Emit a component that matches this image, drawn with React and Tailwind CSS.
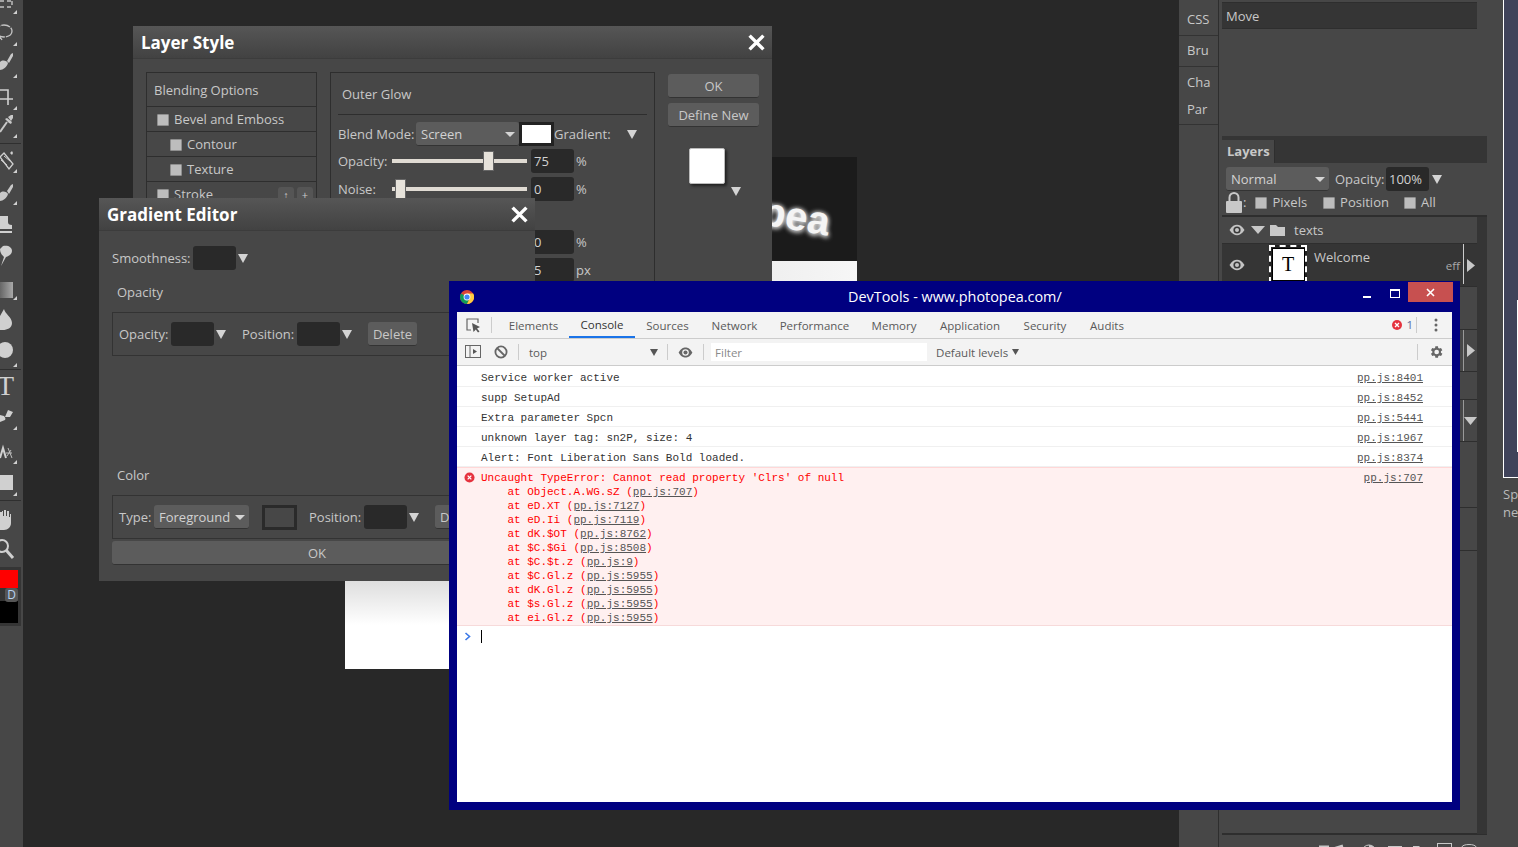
import { Fragment } from "react";

const Tri = ({ className = "" }) => (
  <svg width="10" height="10" viewBox="0 0 10 10" className={className}>
    <polygon points="0,1 10,1 5,10" fill="#d4d4d4" />
  </svg>
);

const CloseX = ({ size = 16 }) => (
  <svg width={size} height={size} viewBox="0 0 16 16">
    <path d="M1.5 1.5L14.5 14.5M14.5 1.5L1.5 14.5" stroke="#fff" strokeWidth="3.2" />
  </svg>
);

const Check = ({ className = "" }) => (
  <span className={`inline-block h-[12px] w-[12px] shrink-0 rounded-[1px] border border-[#8f8f8f] bg-[#bdbdbd] ${className}`} />
);

const Eye = () => (
  <svg width="16" height="12" viewBox="0 0 16 12">
    <path d="M0.5 6C3 2 5.5 0.8 8 0.8S13 2 15.5 6C13 10 10.5 11.2 8 11.2S3 10 0.5 6Z" fill="#c4c4c4" />
    <circle cx="8" cy="6" r="3.6" fill="#3a3a3a" />
    <circle cx="8" cy="6" r="2" fill="#c4c4c4" />
  </svg>
);

const Field = ({ value, className = "" }) => (
  <div className={`flex h-[24px] w-[43px] shrink-0 items-center rounded-[3px] bg-[#292929] pl-[3px] pt-[2px] text-[13px] text-[#d2d2d2] ${className}`}>
    {value}
  </div>
);

const Select = ({ label, className = "" }) => (
  <div className={`flex h-[24px] shrink-0 items-center justify-between rounded-[3px] border-b border-[#333] bg-[#5c5c5c] pl-[5px] pr-[4px] pt-[2px] text-[13px] text-[#d2d2d2] ${className}`}>
    {label}
    <svg width="10" height="6" viewBox="0 0 10 6"><polygon points="0,0 10,0 5,5" fill="#d4d4d4" /></svg>
  </div>
);

const Button = ({ label, className = "" }) => (
  <div className={`flex h-[24px] items-center justify-center rounded-[3px] border-b border-[#333] bg-[#5c5c5c] pt-[2px] text-[13px] text-[#c8c8c8] ${className}`}>
    {label}
  </div>
);

const Corner = ({ y }) => <polygon points={`17,${y} 17,${y + 4} 13,${y + 4}`} fill="#d0d0d0" />;

const tools = [
  { h: 15, c: 10, icon: <path d="M0 1H4M7 1H11M12 1V5M0 7H4M7 7H11" stroke="#c4c4c4" strokeWidth="1.4" fill="none" /> },
  { h: 31, c: 27, icon: <><ellipse cx="4" cy="16" rx="8" ry="6" stroke="#c4c4c4" strokeWidth="1.3" fill="none" strokeDasharray="9 1" /><path d="M0 22L2 25" stroke="#c4c4c4" strokeWidth="1.3" /></> },
  { h: 32, c: 28, icon: <path d="M7 15L11 8L13 7L13 10L9 17ZM0 16C3 13 7 15 8 17C7 21 3 24 0 24Z" fill="#c8c8c8" /> },
  { h: 32, c: 28, icon: <path d="M0 12H8V27M0 21H13" stroke="#d0d0d0" strokeWidth="1.6" fill="none" /> },
  { h: 33, c: 24, icon: <><path d="M8 7L11 5H13V8L11 11ZM5 9L7 8L12 12L11 14L9 13Z" fill="#c8c8c8" /><path d="M7 12L0 22" stroke="#c8c8c8" strokeWidth="2" /></> },
  { sep: true },
  { h: 32, c: 25, icon: <><path d="M0 13L4 9L13 20L9 25Z" stroke="#d0d0d0" strokeWidth="1.3" fill="none" /><path d="M1 16L7 21M4 12L10 17" stroke="#d0d0d0" /><path d="M10 9L12 7L13 9L12 11Z" fill="#d0d0d0" /></> },
  { h: 32, c: 25, icon: <path d="M7 15L11 9L13 8L13 11L9 18ZM0 17C3 14 7 16 8 18C7 22 3 25 0 25Z" fill="#c8c8c8" /> },
  { h: 32, icon: <path d="M0 8H8V14C8 16 9 17 12 17V21H0ZM0 23H12V25H0Z" fill="#d0d0d0" /> },
  { h: 32, icon: <path d="M3 6C8 5 12 7 12 11C12 14 9 16 6 17L1 26L4 17C2 15 0 13 0 9Z" fill="#d0d0d0" /> },
  { h: 32, c: 24, grad: true, icon: <rect x="0" y="10" width="13" height="16" fill="url(#tg)" /> },
  { h: 31, icon: <path d="M4 5C5 10 12 13 12 19C12 24 7 26 3 26H0V12Z" fill="#d0d0d0" /> },
  { h: 34, c: 28, icon: <circle cx="5" cy="15" r="8" fill="#d0d0d0" /> },
  { sep: true },
  { h: 32, t: true },
  { h: 34, c: 24, icon: <path d="M8 8L13 10L10 15L5 15ZM4 14C5 15 6 17 5 18L0 20V13Z" fill="#d0d0d0" /> },
  { h: 32, c: 24, icon: <><path d="M0 22L3 12L6 22" stroke="#d0d0d0" strokeWidth="2" fill="none" /><path d="M8 12L12 22M11 14L7 20M6 17H12" stroke="#c0c0c0" /></> },
  { h: 32, c: 24, icon: <rect x="0" y="7" width="13" height="15" fill="#d0d0d0" /> },
  { sep: true },
  { h: 33, icon: <path d="M0 14V11H2V10H3V15H4V9H6V15H7V10H9V16H10V13H11V22C11 26 8 29 4 29H0Z" fill="#d0d0d0" /> },
  { h: 32, icon: <><circle cx="2" cy="12" r="6" fill="none" stroke="#d0d0d0" strokeWidth="2" /><path d="M6 16L13 24" stroke="#d0d0d0" strokeWidth="3" /></> },
];

function Toolbar() {
  return (
    <div className="flex w-[23px] shrink-0 flex-col overflow-hidden bg-[#474747]">
      {tools.map((tool, i) =>
        tool.sep ? (
          <div key={i} className="h-[1px] w-[21px] shrink-0 bg-[#2f2f2f]" />
        ) : tool.t ? (
          <div key={i} className="flex h-[32px] w-[23px] shrink-0 items-center overflow-hidden">
            <span className="-ml-[3px] font-['Liberation_Serif',serif] text-[28px] leading-none text-[#d0d0d0]">T</span>
          </div>
        ) : (
          <svg key={i} width="23" height={tool.h} viewBox={`0 0 23 ${tool.h}`} className="shrink-0">
            {tool.grad && (
              <defs>
                <linearGradient id="tg">
                  <stop offset="0" stopColor="#666" />
                  <stop offset="1" stopColor="#a8a8a8" />
                </linearGradient>
              </defs>
            )}
            {tool.icon}
            {tool.c && <Corner y={tool.c} />}
          </svg>
        )
      )}
      <div className="mt-[1px] flex h-[59px] w-[21px] shrink-0 flex-col justify-between bg-[#353535] py-[3px]">
        <div className="h-[18px] w-[18px] bg-[#ff0000]" />
        <div className="relative z-10 -my-[3px] ml-[5px] flex h-[14px] w-[13px] items-center justify-center rounded-[3px] bg-[#555] text-[12px] leading-none text-[#b5d3f2]">
          D
        </div>
        <div className="h-[22px] w-[18px] bg-black" />
      </div>
    </div>
  );
}

function Canvas() {
  return (
    <div className="absolute left-[345px] top-[157px] h-[512px] w-[512px] overflow-hidden bg-[#ffffff]">
      <div className="flex h-[104px] items-start justify-end overflow-hidden bg-[#1b1b1b] pr-[26px] pt-[25px]">
        <span className="rotate-[10deg] font-['Liberation_Sans',sans-serif] text-[40px] font-bold leading-[48px] text-[#f4f4f4] [text-shadow:0_0_5px_#fff,1px_2px_5px_#aaa]">
          Photopea
        </span>
      </div>
      <div className="h-[320px] bg-gradient-to-r from-[#cfcfcf] to-[#f6f6f6]" />
      <div className="h-[88px] bg-gradient-to-b from-[#dedede] via-white via-50% to-white" />
    </div>
  );
}

const listRow = "flex items-center border-b border-[#2e2e2e] pt-[2px] text-[13px]";
const formRow = "flex h-[24px] items-center [&>span]:pt-[2px]";

function LayerStyle() {
  return (
    <div className="absolute left-[133px] top-[26px] h-[480px] w-[639px] bg-[#474747] text-[#c8c8c8]">
      <div className="flex h-[33px] items-center justify-between border-b border-[#3c3c3c] bg-gradient-to-b from-[#565656] to-[#424242] pl-[8px] pr-[7px]">
        <span className="mt-[2px] text-[17px] font-bold text-white">Layer Style</span>
        <CloseX size={17} />
      </div>
      <div className="flex pl-[13px] pt-[13px]">
        <div className="w-[171px] shrink-0 border border-[#2e2e2e]">
          <div className={`h-[34px] pl-[7px] ${listRow}`}>Blending Options</div>
          <div className={`h-[25px] gap-[5px] pl-[10px] ${listRow}`}><Check />Bevel and Emboss</div>
          <div className={`h-[25px] gap-[5px] pl-[23px] ${listRow}`}><Check />Contour</div>
          <div className={`h-[25px] gap-[5px] pl-[23px] ${listRow}`}><Check />Texture</div>
          <div className={`h-[25px] gap-[5px] pl-[10px] ${listRow}`}>
            <Check />Stroke
            <span className="ml-auto flex h-[16px] w-[16px] items-center justify-center rounded-[3px] bg-[#555] text-[11px]">↑</span>
            <span className="mr-[3px] -ml-[2px] flex h-[16px] w-[16px] items-center justify-center rounded-[3px] bg-[#555] text-[11px]">+</span>
          </div>
        </div>
        <div className="ml-[13px] h-[400px] w-[325px] shrink-0 border border-[#2e2e2e] px-[7px] text-[13px]">
          <div className="flex h-[42px] items-center border-b border-[#2e2e2e] pl-[4px] pt-[2px]">Outer Glow</div>
          <div className={`mt-[7px] ${formRow}`}>
            <span className="w-[78px] shrink-0">Blend Mode:</span>
            <Select label="Screen" className="w-[103px]" />
            <div className="h-[24px] w-[35px] shrink-0 border-[3px] border-[#222] bg-white" />
            <span>Gradient:</span>
            <Tri className="ml-[16px]" />
          </div>
          <div className={`mt-[3px] ${formRow}`}>
            <span className="w-[54px] shrink-0">Opacity:</span>
            <div className="relative h-[4px] w-[135px] shrink-0 bg-[#e0dbd3]">
              <i className="absolute left-[91px] top-[-8px] h-[20px] w-[11px] border border-[#666] bg-[#e6e2da]" />
            </div>
            <Field value="75" className="ml-[4px]" />
            <span className="ml-[2px]">%</span>
          </div>
          <div className={`mt-[4px] ${formRow}`}>
            <span className="w-[54px] shrink-0">Noise:</span>
            <div className="relative h-[4px] w-[135px] shrink-0 bg-[#e0dbd3]">
              <i className="absolute left-[3px] top-[-8px] h-[20px] w-[11px] border border-[#666] bg-[#e6e2da]" />
            </div>
            <Field value="0" className="ml-[4px]" />
            <span className="ml-[2px]">%</span>
          </div>
          <div className={`ml-[193px] mt-[29px] ${formRow}`}>
            <Field value="0" />
            <span className="ml-[2px]">%</span>
          </div>
          <div className={`ml-[193px] mt-[4px] ${formRow}`}>
            <Field value="5" />
            <span className="ml-[2px]">px</span>
          </div>
        </div>
        <div className="ml-[13px] flex w-[91px] shrink-0 flex-col pt-[2px]">
          <Button label="OK" />
          <Button label="Define New" className="mt-[5px]" />
          <div className="mt-[21px] ml-[21px] h-[36px] w-[36px] rounded-[2px] border border-[#bbb] bg-white shadow-[2px_2px_3px_#222]" />
          <Tri className="ml-[63px] mt-[2px]" />
        </div>
      </div>
    </div>
  );
}

function GradientEditor() {
  return (
    <div className="absolute left-[99px] top-[198px] flex h-[383px] w-[436px] flex-col bg-[#474747] text-[13px] text-[#c8c8c8]">
      <div className="flex h-[33px] shrink-0 items-center justify-between border-b border-[#3c3c3c] bg-gradient-to-b from-[#565656] to-[#424242] pl-[8px] pr-[7px]">
        <span className="mt-[2px] text-[17px] font-bold text-white">Gradient Editor</span>
        <CloseX size={17} />
      </div>
      <div className="flex flex-col px-[13px]">
        <div className={`mt-[15px] ${formRow}`}>
          <span className="w-[81px] shrink-0">Smoothness:</span>
          <Field value="" />
          <Tri className="ml-[2px]" />
        </div>
        <div className="mt-[13px] pl-[5px] leading-[18px]">Opacity</div>
        <div className={`mt-[11px] h-[44px]! border border-[#333] pl-[6px] ${formRow}`}>
          <span className="w-[52px] shrink-0">Opacity:</span>
          <Field value="" />
          <Tri className="ml-[2px]" />
          <span className="ml-[16px] w-[55px] shrink-0">Position:</span>
          <Field value="" />
          <Tri className="ml-[2px]" />
          <Button label="Delete" className="ml-[16px] w-[49px]" />
        </div>
        <div className="mt-[110px] pl-[5px] leading-[18px]">Color</div>
        <div className={`mt-[11px] h-[44px]! border border-[#333] pl-[6px] ${formRow}`}>
          <span className="w-[35px] shrink-0">Type:</span>
          <Select label="Foreground" className="w-[95px]" />
          <div className="ml-[13px] h-[25px] w-[35px] shrink-0 border-[3px] border-[#2a2a2a] bg-[#474747]" />
          <span className="ml-[12px] w-[55px] shrink-0">Position:</span>
          <Field value="" />
          <Tri className="ml-[2px]" />
          <Button label="Delete" className="ml-[16px] w-[49px]" />
        </div>
        <Button label="OK" className="mt-[2px]" />
      </div>
    </div>
  );
}

const tabs = [
  { label: "Elements", w: "w-[71px]" },
  { label: "Console", w: "w-[66px]", active: true },
  { label: "Sources", w: "w-[65px]" },
  { label: "Network", w: "w-[69px]" },
  { label: "Performance", w: "w-[91px]" },
  { label: "Memory", w: "w-[68px]" },
  { label: "Application", w: "w-[84px]" },
  { label: "Security", w: "w-[66px]" },
  { label: "Audits", w: "w-[58px]" },
];

const logs = [
  ["Service worker active", "pp.js:8401"],
  ["supp SetupAd", "pp.js:8452"],
  ["Extra parameter Spcn", "pp.js:5441"],
  ["unknown layer tag: sn2P, size: 4", "pp.js:1967"],
  ["Alert: Font Liberation Sans Bold loaded.", "pp.js:8374"],
];

const stack = [
  ["Object.A.WG.sZ", "pp.js:707"],
  ["eD.XT", "pp.js:7127"],
  ["eD.Ii", "pp.js:7119"],
  ["dK.$OT", "pp.js:8762"],
  ["$C.$Gi", "pp.js:8508"],
  ["$C.$t.z", "pp.js:9"],
  ["$C.Gl.z", "pp.js:5955"],
  ["dK.Gl.z", "pp.js:5955"],
  ["$s.Gl.z", "pp.js:5955"],
  ["ei.Gl.z", "pp.js:5955"],
];

const Sep = ({ className = "" }) => <span className={`h-[16px] w-px shrink-0 bg-[#ccc] ${className}`} />;

function ChromeLogo() {
  return (
    <svg width="14" height="14" viewBox="0 0 14 14">
      <circle cx="7" cy="7" r="7" fill="#db4437" />
      <path d="M7 7L1 3.5A7 7 0 0 0 7 14L10 7Z" fill="#0f9d58" />
      <path d="M7 3.5H13.2A7 7 0 0 1 7 14L10 8Z" fill="#ffcd40" />
      <circle cx="7" cy="7" r="3.4" fill="#fff" />
      <circle cx="7" cy="7" r="2.6" fill="#4285f4" />
    </svg>
  );
}

function DevTools() {
  return (
    <div className="absolute left-[449px] top-[281px] flex h-[529px] w-[1011px] flex-col bg-[#000080] px-[8px] pb-[8px]">
      <div className="flex h-[31px] shrink-0 items-center">
        <span className="ml-[3px] shrink-0"><ChromeLogo /></span>
        <span className="ml-[374px] w-[214px] shrink-0 whitespace-nowrap font-['Open_Sans',sans-serif] text-[14.4px] text-white">DevTools - www.photopea.com/</span>
        <span className="ml-[301px] mt-[1px] h-[2px] w-[8px] shrink-0 bg-white" />
        <span className="ml-[19px] -mt-[6px] h-[9px] w-[10px] shrink-0 border border-t-2 border-white" />
        <span className="ml-[8px] -mt-[9px] flex h-[20px] w-[45px] shrink-0 items-center justify-center bg-[#c75050]">
          <svg width="9" height="9" viewBox="0 0 9 9"><path d="M1 1L8 8M8 1L1 8" stroke="#fff" strokeWidth="1.6" /></svg>
        </span>
      </div>
      <div className="flex min-h-0 flex-1 flex-col bg-white">
        <div className="flex h-[27px] shrink-0 items-center border-b border-[#ccc] bg-[#f3f3f3] font-['Open_Sans',sans-serif] text-[11.5px] text-[#5a5a5a]">
          <svg width="16" height="16" viewBox="0 0 16 16" className="ml-[8px] shrink-0">
            <path d="M6 13H2V2H13V6" fill="none" stroke="#666" strokeWidth="1.2" />
            <path d="M7 6L15 10L12 11.5L14.5 14.5L13 15.5L10.8 12.5L8.5 15Z" fill="#555" />
          </svg>
          <Sep className="ml-[10px] mr-[6px]" />
          {tabs.map((tab) => (
            <div
              key={tab.label}
              className={`flex h-[26px] shrink-0 items-center justify-center pt-[1px] ${tab.w} ${tab.active ? "border-b-2 border-[#1a73e8] text-[#333]" : ""}`}
            >
              {tab.label}
            </div>
          ))}
          <svg width="12" height="12" viewBox="0 0 12 12" className="ml-auto shrink-0">
            <circle cx="6" cy="6" r="5" fill="#e5323e" />
            <path d="M4 4L8 8M8 4L4 8" stroke="#fff" strokeWidth="1.3" />
          </svg>
          <span className="ml-[3px] text-[#5a6aa0]">1</span>
          <Sep className="ml-[3px]" />
          <svg width="4" height="14" viewBox="0 0 4 14" className="ml-[17px] mr-[14px] shrink-0">
            <circle cx="2" cy="2" r="1.5" fill="#666" /><circle cx="2" cy="7" r="1.5" fill="#666" /><circle cx="2" cy="12" r="1.5" fill="#666" />
          </svg>
        </div>
        <div className="flex h-[27px] shrink-0 items-center border-b border-[#ccc] bg-[#f3f3f3] font-['Open_Sans',sans-serif] text-[11.5px] text-[#5a5a5a]">
          <svg width="16" height="14" viewBox="0 0 16 14" className="ml-[8px] shrink-0">
            <rect x="0.5" y="0.5" width="15" height="12" fill="none" stroke="#666" />
            <path d="M5 1V12" stroke="#666" />
            <polygon points="8,4 12,6.5 8,9" fill="#555" />
          </svg>
          <svg width="14" height="14" viewBox="0 0 14 14" className="ml-[13px] shrink-0">
            <circle cx="7" cy="7" r="5.6" fill="none" stroke="#666" strokeWidth="1.8" />
            <path d="M3 3L11 11" stroke="#666" strokeWidth="1.8" />
          </svg>
          <Sep className="ml-[10px]" />
          <span className="ml-[10px] pt-[1px]">top</span>
          <svg width="8" height="7" viewBox="0 0 8 7" className="ml-[103px] shrink-0"><polygon points="0,0 8,0 4,7" fill="#555" /></svg>
          <Sep className="ml-[9px]" />
          <svg width="17" height="11" viewBox="0 0 16 12" className="ml-[9px] shrink-0">
            <path d="M0.5 6C3 1.5 5.5 0.5 8 0.5S13 1.5 15.5 6C13 10.5 10.5 11.5 8 11.5S3 10.5 0.5 6Z" fill="#666" />
            <circle cx="8" cy="6" r="3.6" fill="#f3f3f3" /><circle cx="8" cy="6" r="2.2" fill="#666" />
          </svg>
          <Sep className="ml-[9px]" />
          <div className="ml-[7px] flex h-[18px] w-[216px] shrink-0 items-center bg-white pl-[4px] pt-[1px] text-[#8a8a8a]">Filter</div>
          <span className="ml-[9px] pt-[1px]">Default levels</span>
          <svg width="7" height="6" viewBox="0 0 7 6" className="ml-[4px] shrink-0"><polygon points="0,0 7,0 3.5,6" fill="#555" /></svg>
          <Sep className="ml-auto" />
          <svg width="16" height="16" viewBox="0 0 24 24" className="ml-[10px] mr-[8px] shrink-0">
            <path fill="#666" d="M19.4 13a7.8 7.8 0 0 0 0-2l2.1-1.6-2-3.5-2.5 1a7.6 7.6 0 0 0-1.7-1L15 3.2h-4l-.4 2.7a7.6 7.6 0 0 0-1.7 1l-2.5-1-2 3.5L6.5 11a7.8 7.8 0 0 0 0 2l-2.1 1.6 2 3.5 2.5-1a7.6 7.6 0 0 0 1.7 1l.4 2.7h4l.4-2.7a7.6 7.6 0 0 0 1.7-1l2.5 1 2-3.5zM13 15.5a3.5 3.5 0 1 1 0-7 3.5 3.5 0 0 1 0 7z" />
          </svg>
        </div>
        <div className="flex flex-col pt-[1px] font-['Liberation_Mono',monospace] text-[11px] text-[#333]">
          {logs.map(([text, src]) => (
            <div key={src} className="flex h-[20px] items-center justify-between border-b border-[#f0f0f0] pl-[24px] pr-[29px] pt-[3px]">
              <span>{text}</span>
              <span className="text-[#555] underline">{src}</span>
            </div>
          ))}
          <div className="flex h-[159px] justify-between border-b border-[#f7dada] border-t border-t-[#ffd7d7] bg-[#fff0f0] pl-[7px] pr-[29px] pt-[3px] leading-[14px] text-[#ff0000]">
            <svg width="11" height="11" viewBox="0 0 12 12" className="mt-[1px] shrink-0">
              <circle cx="6" cy="6" r="5.5" fill="#e5323e" />
              <path d="M4 4L8 8M8 4L4 8" stroke="#fff" strokeWidth="1.4" />
            </svg>
            <div className="ml-[6px] flex-1 whitespace-pre">
              <div>Uncaught TypeError: Cannot read property 'Clrs' of null</div>
              {stack.map(([fn, src], i) => (
                <Fragment key={i}>
                  <div>
                    {"    at " + fn + " ("}
                    <span className="text-[#555] underline">{src}</span>
                    {")"}
                  </div>
                </Fragment>
              ))}
            </div>
            <span className="text-[#555] underline">pp.js:707</span>
          </div>
          <div className="flex h-[20px] items-center pl-[7px]">
            <svg width="8" height="9" viewBox="0 0 8 9" className="shrink-0"><path d="M1.5 1L5.5 4.5L1.5 8" fill="none" stroke="#3b78e7" strokeWidth="1.6" /></svg>
            <span className="ml-[9px] h-[13px] w-px bg-black" />
          </div>
        </div>
      </div>
    </div>
  );
}

const layerRows = [
  { h: "h-[43px]" },
  { h: "h-[42px]", arrow: "right" },
  { h: "h-[28px]" },
  { h: "h-[42px]", arrow: "down" },
  { h: "h-[66px]" },
  { h: "h-[43px]" },
  { h: "h-[283px]" },
];

function RightPanel() {
  return (
    <div className="flex w-[339px] shrink-0 bg-[#474747] font-['Open_Sans',sans-serif] text-[13px] text-[#c8c8c8]">
      <div className="flex w-[40px] shrink-0 flex-col border-r border-[#2e2e2e]">
        <div className="flex h-[36px] items-end border-b border-[#333] pb-[6px] pl-[8px]">CSS</div>
        <div className="flex h-[31px] items-center border-b border-[#333] pl-[8px]">Bru</div>
        <div className="flex h-[30px] items-end pb-[5px] pl-[8px]">Cha</div>
        <div className="flex h-[28px] items-center border-b border-[#333] pb-[2px] pl-[8px]">Par</div>
      </div>
      <div className="ml-[3px] flex w-[265px] shrink-0 flex-col">
        <div className="flex w-[255px] flex-col">
          <div className="mt-[2px] flex h-[27px] items-center border-y border-[#2e2e2e] bg-[#353535] pl-[4px] pt-[2px]">Move</div>
          <div className="h-[107px]" />
        </div>
        <div className="flex h-[27px] items-end bg-[#353535]">
          <div className="flex h-[23px] w-[53px] items-center border-r border-[#2e2e2e] bg-[#474747] pl-[5px] font-bold">Layers</div>
        </div>
        <div className={`mt-[4px] pl-[4px] ${formRow}`}>
          <Select label="Normal" className="w-[103px]" />
          <span className="ml-[6px] w-[51px] shrink-0">Opacity:</span>
          <Field value="100%" />
          <Tri className="ml-[3px]" />
        </div>
        <div className="flex h-[26px] items-center border-b-2 border-[#2e2e2e] pl-[4px] [&>span]:pb-[1px]">
          <svg width="16" height="21" viewBox="0 0 16 21" className="mb-[2px] shrink-0">
            <path d="M3.5 9V5.5A4.5 4.5 0 0 1 12.5 5.5V9" fill="none" stroke="#c8c8c8" strokeWidth="2" />
            <rect x="0" y="9" width="16" height="12" rx="1" fill="#c8c8c8" />
          </svg>
          <span className="ml-[1px]">:</span>
          <Check className="ml-[9px]" />
          <span className="ml-[5px]">Pixels</span>
          <Check className="ml-[16px]" />
          <span className="ml-[5px]">Position</span>
          <Check className="ml-[15px]" />
          <span className="ml-[5px]">All</span>
        </div>
        <div className="flex h-[617px] shrink-0">
          <div className="flex w-[255px] shrink-0 flex-col">
            <div className="flex h-[27px] shrink-0 items-center border-b border-[#2e2e2e] pl-[7px]">
              <Eye />
              <svg width="14" height="8" viewBox="0 0 14 8" className="ml-[6px] shrink-0"><polygon points="0,0 14,0 7,8" fill="#c8c8c8" /></svg>
              <svg width="15" height="12" viewBox="0 0 15 12" className="ml-[5px] shrink-0"><path d="M0 1H6L8 3H15V12H0Z" fill="#c8c8c8" /></svg>
              <span className="ml-[9px] pt-[2px]">texts</span>
            </div>
            <div className="flex h-[43px] shrink-0 border-b border-[#2e2e2e] bg-[#353535]">
              <span className="ml-[7px] self-center"><Eye /></span>
              <div className="ml-[24px] mt-[1px] flex h-[38px] w-[38px] shrink-0 items-center justify-center border-2 border-dashed border-white bg-[#222]">
                <div className="flex h-[33px] w-[33px] items-center justify-center border border-black bg-white font-['Liberation_Serif',serif] text-[20px] text-black">T</div>
              </div>
              <span className="ml-[7px] mt-[4px]">Welcome</span>
              <span className="ml-auto self-center pt-[2px] text-[11.5px] text-[#aaa]">eff</span>
              <span className="ml-[3px] h-[40px] w-px bg-[#ccc]" />
              <svg width="8" height="13" viewBox="0 0 8 13" className="ml-[3px] mr-[2px] shrink-0 self-center"><polygon points="0,0 8,6.5 0,13" fill="#c8c8c8" /></svg>
            </div>
            {layerRows.map((row, i) => (
              <div key={i} className={`flex shrink-0 items-center justify-end border-b border-[#2e2e2e] ${row.h}`}>
                {row.arrow && <span className="h-full w-px bg-[#999]" />}
                {row.arrow === "right" && (
                  <svg width="8" height="13" viewBox="0 0 8 13" className="ml-[3px] mr-[2px] shrink-0"><polygon points="0,0 8,6.5 0,13" fill="#c8c8c8" /></svg>
                )}
                {row.arrow === "down" && (
                  <svg width="13" height="8" viewBox="0 0 13 8" className="shrink-0"><polygon points="0,0 13,0 6.5,8" fill="#c8c8c8" /></svg>
                )}
              </div>
            ))}
          </div>
          <div className="w-[10px] shrink-0 bg-[#353535]" />
        </div>
        <div className="flex h-[13px] items-start overflow-hidden border-t border-[#2e2e2e] pl-[97px] pt-[8px]">
          <svg width="250" height="14" viewBox="0 0 250 14" className="shrink-0">
            <path d="M0 4H10M14 6L24 3" stroke="#c8c8c8" strokeWidth="3" fill="none" />
            <path d="M26 5H34" stroke="#c8c8c8" strokeWidth="2" />
            <circle cx="50" cy="9" r="7" fill="none" stroke="#c8c8c8" strokeWidth="1" />
            <path d="M50 2A7 7 0 0 1 50 16Z" fill="#c8c8c8" />
            <rect x="69" y="3" width="14" height="11" fill="#c8c8c8" />
            <circle cx="76" cy="8" r="2.5" fill="#474747" />
            <path d="M94 3H100L102 5H109V14H94Z" fill="#c8c8c8" />
            <rect x="118.500" y="0.500" width="14" height="12" fill="none" stroke="#c8c8c8" />
            <ellipse cx="150" cy="4" rx="7" ry="2.5" fill="none" stroke="#c8c8c8" />
            <path d="M143 4L144 14M157 4L156 14" stroke="#c8c8c8" />
          </svg>
        </div>
      </div>
      <div className="ml-[16px] flex w-[15px] shrink-0 flex-col overflow-hidden">
        <div className="flex h-[478px] w-[15px] shrink-0 justify-end border-b border-l border-white bg-[#40435a]">
          <span className="mt-[300px] h-[152px] w-px bg-white" />
        </div>
        <div className="mt-[7px] w-[60px] leading-[18px] text-[#bbb]">Sp<br />ne</div>
      </div>
    </div>
  );
}

export default function App() {
  return (
    <div className="relative flex h-[847px] w-[1518px] overflow-hidden bg-[#282828] font-['Open_Sans',sans-serif]">
      <Toolbar />
      <div className="flex-1" />
      <RightPanel />
      <Canvas />
      <LayerStyle />
      <GradientEditor />
      <DevTools />
    </div>
  );
}
